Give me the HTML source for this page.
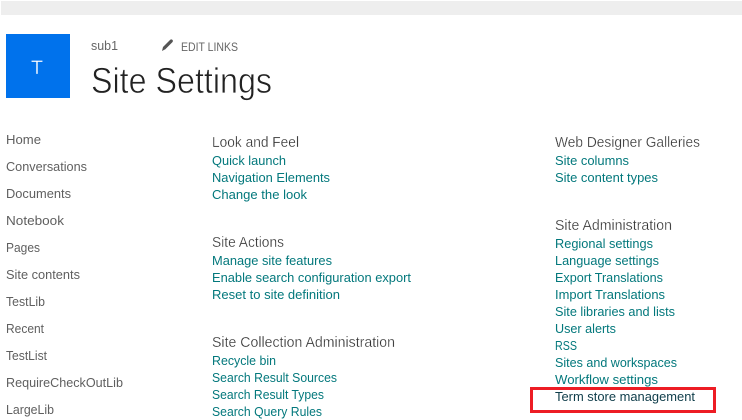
<!DOCTYPE html>
<html lang="en">
<head>
<meta charset="utf-8">
<title>Site Settings</title>
<style>
html,body{margin:0;padding:0;background:#fff;width:742px;height:420px;overflow:hidden}
svg{display:block;position:absolute;left:0;top:0}
text{font-family:"Liberation Sans",sans-serif;font-size:13px}
.n{fill:#5f5f5f}
.l{fill:#03787c}
.h{fill:#333;font-size:14.5px;stroke:#fff;stroke-width:.25px}
</style>
</head>
<body>
<svg width="742" height="420" viewBox="0 0 742 420" xmlns="http://www.w3.org/2000/svg">
<rect x="1" y="1" width="741" height="14" fill="#eeeeee"/>
<rect x="6" y="34" width="64" height="64" fill="#0072ec"/>
<text x="31" y="74" style="font-size:19px;stroke:#0072ec;stroke-width:.3px" fill="#fff" lengthAdjust="spacingAndGlyphs" textLength="12">T</text>
<text x="91" y="50" style="font-size:13px" fill="#666" lengthAdjust="spacingAndGlyphs" textLength="27">sub1</text>
<path d="M162 51l1-4 7-7c.8-.8 1.700-.8 2.400-.1s.7 1.600-.1 2.400l-7 7z" fill="#555"/>
<text x="181" y="51" style="font-size:12px" fill="#666" lengthAdjust="spacingAndGlyphs" textLength="57">EDIT LINKS</text>
<text x="91" y="93" style="font-size:36px;stroke:#fff;stroke-width:.7px" fill="#222" lengthAdjust="spacingAndGlyphs" textLength="181">Site Settings</text>

<g class="n">
<text x="6" y="144" lengthAdjust="spacingAndGlyphs" textLength="35">Home</text>
<text x="6" y="171" lengthAdjust="spacingAndGlyphs" textLength="81">Conversations</text>
<text x="6" y="198" lengthAdjust="spacingAndGlyphs" textLength="65">Documents</text>
<text x="6" y="225" lengthAdjust="spacingAndGlyphs" textLength="58">Notebook</text>
<text x="6" y="252" lengthAdjust="spacingAndGlyphs" textLength="34">Pages</text>
<text x="6" y="279" lengthAdjust="spacingAndGlyphs" textLength="74">Site contents</text>
<text x="6" y="306" lengthAdjust="spacingAndGlyphs" textLength="39">TestLib</text>
<text x="6" y="333" lengthAdjust="spacingAndGlyphs" textLength="38">Recent</text>
<text x="6" y="360" lengthAdjust="spacingAndGlyphs" textLength="41">TestList</text>
<text x="6" y="387" lengthAdjust="spacingAndGlyphs" textLength="117">RequireCheckOutLib</text>
<text x="6" y="414" lengthAdjust="spacingAndGlyphs" textLength="48">LargeLib</text>
</g>

<text class="h" x="212" y="147" lengthAdjust="spacingAndGlyphs" textLength="87">Look and Feel</text>
<g class="l">
<text x="212" y="165" lengthAdjust="spacingAndGlyphs" textLength="74">Quick launch</text>
<text x="212" y="182" lengthAdjust="spacingAndGlyphs" textLength="118">Navigation Elements</text>
<text x="212" y="199" lengthAdjust="spacingAndGlyphs" textLength="95">Change the look</text>
</g>
<text class="h" x="212" y="247" lengthAdjust="spacingAndGlyphs" textLength="72">Site Actions</text>
<g class="l">
<text x="212" y="265" lengthAdjust="spacingAndGlyphs" textLength="120">Manage site features</text>
<text x="212" y="282" lengthAdjust="spacingAndGlyphs" textLength="199">Enable search configuration export</text>
<text x="212" y="299" lengthAdjust="spacingAndGlyphs" textLength="128">Reset to site definition</text>
</g>
<text class="h" x="212" y="347" lengthAdjust="spacingAndGlyphs" textLength="183">Site Collection Administration</text>
<g class="l">
<text x="212" y="365" lengthAdjust="spacingAndGlyphs" textLength="64">Recycle bin</text>
<text x="212" y="382" lengthAdjust="spacingAndGlyphs" textLength="125">Search Result Sources</text>
<text x="212" y="399" lengthAdjust="spacingAndGlyphs" textLength="112">Search Result Types</text>
<text x="212" y="416" lengthAdjust="spacingAndGlyphs" textLength="110">Search Query Rules</text>
</g>

<text class="h" x="555" y="147" lengthAdjust="spacingAndGlyphs" textLength="145">Web Designer Galleries</text>
<g class="l">
<text x="555" y="165" lengthAdjust="spacingAndGlyphs" textLength="74">Site columns</text>
<text x="555" y="182" lengthAdjust="spacingAndGlyphs" textLength="103">Site content types</text>
</g>
<text class="h" x="555" y="230" lengthAdjust="spacingAndGlyphs" textLength="117">Site Administration</text>
<g class="l">
<text x="555" y="248" lengthAdjust="spacingAndGlyphs" textLength="98">Regional settings</text>
<text x="555" y="265" lengthAdjust="spacingAndGlyphs" textLength="104">Language settings</text>
<text x="555" y="282" lengthAdjust="spacingAndGlyphs" textLength="108">Export Translations</text>
<text x="555" y="299" lengthAdjust="spacingAndGlyphs" textLength="110">Import Translations</text>
<text x="555" y="316" lengthAdjust="spacingAndGlyphs" textLength="120">Site libraries and lists</text>
<text x="555" y="333" lengthAdjust="spacingAndGlyphs" textLength="61">User alerts</text>
<text x="555" y="350" lengthAdjust="spacingAndGlyphs" textLength="22">RSS</text>
<text x="555" y="367" lengthAdjust="spacingAndGlyphs" textLength="122">Sites and workspaces</text>
<text x="555" y="384" lengthAdjust="spacingAndGlyphs" textLength="103">Workflow settings</text>
<text x="555" y="401" lengthAdjust="spacingAndGlyphs" textLength="140" style="fill:#0f3d4a">Term store management</text>
</g>
<rect x="531.5" y="388.500" width="183" height="23" fill="none" stroke="#ed1c24" stroke-width="3"/>
</svg>
</body>
</html>
